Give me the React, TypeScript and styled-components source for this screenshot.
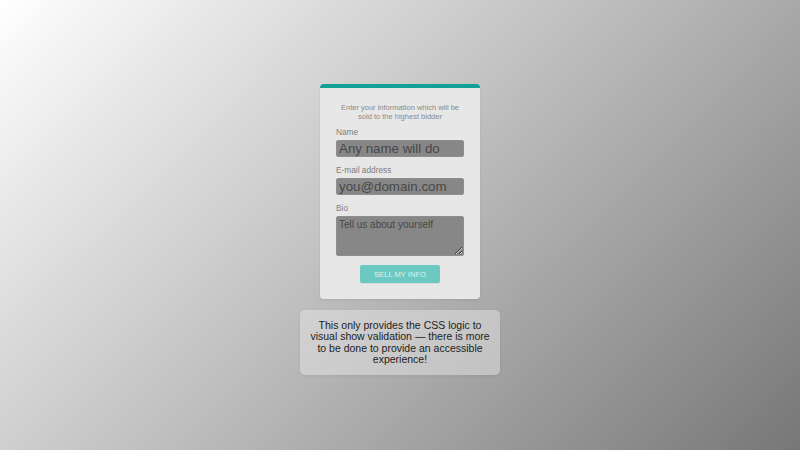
import React from "react";
import styled, { createGlobalStyle } from "styled-components";

const GlobalStyle = createGlobalStyle`
  html, body {
    margin: 0;
    padding: 0;
    height: 100%;
  }
  body {
    font-family: "Liberation Sans", Arial, sans-serif;
    background: linear-gradient(135deg, #ffffff 0%, #bcbcbc 50%, #777777 100%);
    background-attachment: fixed;
    min-height: 450px;
  }
`;

const Page = styled.main`
  display: flex;
  flex-direction: column;
  align-items: center;
  padding-top: 84px;
  gap: 11px;
`;

const Card = styled.form`
  box-sizing: border-box;
  width: 160px;
  height: 215px;
  background: #e7e7e7;
  border-top: 4px solid #12a097;
  border-radius: 4px;
  padding: 15px 16px 16px;
  display: flex;
  flex-direction: column;
  box-shadow: 0 1px 3px rgba(0, 0, 0, 0.08);
`;

const Intro = styled.p`
  margin: 0 0 6px;
  font-size: 7.5px;
  line-height: 9px;
  color: #8a8a8a;
  text-align: center;
`;

const Field = styled.label<{ $last?: boolean }>`
  display: flex;
  flex-direction: column;
  gap: 3px;
  margin-bottom: ${(p) => (p.$last ? "9px" : "8px")};
`;

const LabelText = styled.span`
  font-size: 8.3px;
  line-height: 10px;
  color: #7d7d7d;
`;

const inputBase = `
  box-sizing: border-box;
  width: 128px;
  margin: 0;
  padding: 0 2px;
  background: #878787;
  border: 1px solid #8e8e8e;
  border-radius: 2px;
  font-family: "Liberation Sans", Arial, sans-serif;
  color: #3f3f3f;
  outline: none;
  &::placeholder {
    color: #474747;
    opacity: 1;
  }
`;

const TextInput = styled.input`
  ${inputBase}
  height: 17px;
  font-size: 13.33px;
  line-height: 15px;
`;

const TextArea = styled.textarea`
  ${inputBase}
  height: 40px;
  font-size: 10px;
  line-height: 12px;
  padding-top: 2px;
  resize: vertical;
  display: block;
`;

const Submit = styled.button`
  align-self: center;
  width: 80px;
  height: 18px;
  padding: 0;
  background: #6cc9c1;
  color: #def3f0;
  border: none;
  border-radius: 2px;
  font-family: "Liberation Sans", Arial, sans-serif;
  font-size: 7.6px;
  text-transform: uppercase;
  box-shadow: 0 1px 1px rgba(0, 0, 0, 0.06);
`;

const Note = styled.aside`
  box-sizing: border-box;
  width: 200px;
  height: 65px;
  padding: 10px 10px 8px;
  background: rgba(235, 235, 235, 0.45);
  border-radius: 5px;
  font-size: 10.5px;
  line-height: 11.4px;
  color: #222222;
  text-align: center;
  box-shadow: 0 1px 3px rgba(0, 0, 0, 0.06);
`;

export default function App() {
  return (
    <>
      <GlobalStyle />
      <Page>
        <Card onSubmit={(e) => e.preventDefault()}>
          <Intro>Enter your information which will be sold to the highest bidder</Intro>
          <Field>
            <LabelText>Name</LabelText>
            <TextInput type="text" placeholder="Any name will do" />
          </Field>
          <Field>
            <LabelText>E-mail address</LabelText>
            <TextInput type="email" placeholder="you@domain.com" />
          </Field>
          <Field $last>
            <LabelText>Bio</LabelText>
            <TextArea placeholder="Tell us about yourself" />
          </Field>
          <Submit type="submit">Sell my info</Submit>
        </Card>
        <Note>
          This only provides the CSS logic to visual show validation — there is more to be done to
          provide an accessible experience!
        </Note>
      </Page>
    </>
  );
}
